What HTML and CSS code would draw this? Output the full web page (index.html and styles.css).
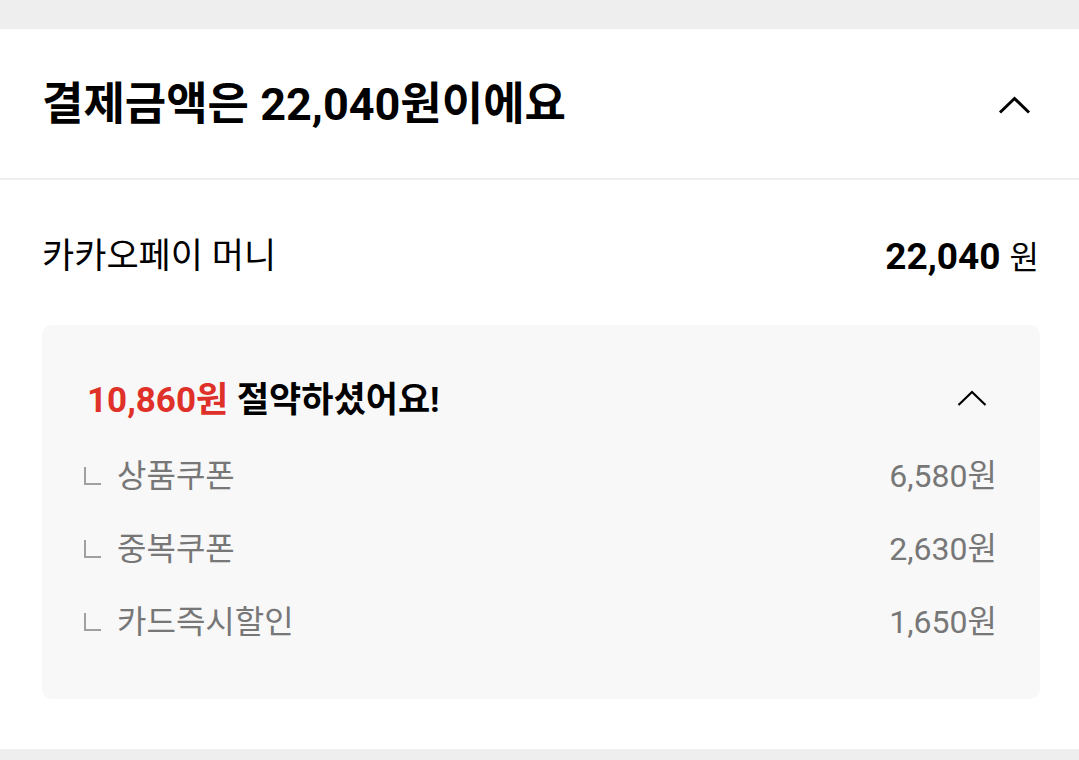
FILE: index.html
```html
<!DOCTYPE html>
<html lang="ko">
<head>
<meta charset="utf-8">
<title>결제금액</title>
<link rel="stylesheet" href="styles.css">
</head>
<body>
<div class="band"></div>
<header class="header">
  <h1 class="title">결제금액은 22,040원이에요</h1>
  <svg class="chev-lg" width="33" height="18" viewBox="0 0 33 18"><polyline points="2,16.5 16.5,2.5 31,16.5" fill="none" stroke="#000" stroke-width="3"/></svg>
</header>
<main class="content">
  <div class="money-row">
    <span class="money-label">카카오페이 머니</span>
    <span class="money-amount"><b>22,040</b><span class="won">원</span></span>
  </div>
  <section class="box">
    <div class="box-head">
      <span class="save"><span class="red">10,860원</span> 절약하셨어요!</span>
      <svg class="chev-sm" width="30" height="16" viewBox="0 0 30 16"><polyline points="1.5,15 15,2 28.5,15" fill="none" stroke="#000" stroke-width="2.2"/></svg>
    </div>
    <ul class="items">
      <li class="item"><span class="name"><span class="mark"></span>상품쿠폰</span><span class="val">6,580원</span></li>
      <li class="item"><span class="name"><span class="mark"></span>중복쿠폰</span><span class="val">2,630원</span></li>
      <li class="item"><span class="name"><span class="mark"></span>카드즉시할인</span><span class="val">1,650원</span></li>
    </ul>
  </section>
</main>
<div class="band band-bottom"></div>
</body>
</html>
```

FILE: styles.css
```css
* { box-sizing: border-box; }
html, body { margin: 0; padding: 0; }
body {
  background: #ffffff;
  font-family: "Roboto", "Noto Sans CJK KR", sans-serif;
  color: #000;
  width: 1079px;
  height: 760px;
  overflow: hidden;
}
.band { height: 29px; background: #eeeeee; }
.band-bottom { height: 11px; margin-top: 50px; }
.header {
  height: 151px;
  display: flex;
  align-items: center;
  justify-content: space-between;
  padding: 0 48px 0 42px;
  border-bottom: 2px solid #eeeeee;
}
.title {
  margin: 0;
  padding-top: 3px;
  font-size: 45px;
  font-weight: 700;
  line-height: 60px;
}
.chev-lg { display: block; margin-top: 2px; }
.content { padding: 0 40px 0 42px; }
.money-row {
  display: flex;
  justify-content: space-between;
  align-items: flex-start;
  padding-top: 47px;
  height: 145px;
}
.money-label {
  font-size: 35px;
  line-height: 60px;
}
.money-amount {
  line-height: 60px;
  display: flex;
  align-items: baseline;
}
.money-amount b { font-size: 37px; font-weight: 700; }
.won { font-size: 32px; margin-left: 9px; }
.box {
  background: #f8f8f8;
  border-radius: 10px;
  height: 374px;
  margin-right: -1px;
  padding: 41px 43px 0 45px;
}
.box-head {
  display: flex;
  justify-content: space-between;
  align-items: center;
  height: 60px;
}
.save {
  font-size: 35px;
  font-weight: 700;
}
.red { color: #e0302a; }
.chev-sm { display: block; margin-right: 10px; margin-top: 3px; }
.items {
  list-style: none;
  margin: 10px 0 0;
  padding: 0;
}
.item {
  display: flex;
  justify-content: space-between;
  align-items: center;
  height: 73px;
  font-size: 32px;
  color: #777777;
}
.name { display: flex; align-items: center; }
.mark {
  width: 17px;
  height: 18px;
  border-left: 2px solid #a0a0a0;
  border-bottom: 2px solid #a0a0a0;
  margin: 6px 16px 0 -3px;
}
```
